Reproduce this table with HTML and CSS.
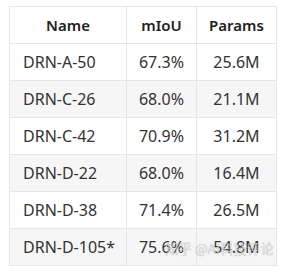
FILE: index.html
```html
<!DOCTYPE html>
<html>
<head>
<meta charset="utf-8">
<link rel="stylesheet" href="styles.css">
</head>
<body>
<div class="wrap">
<table class="tbl">
<thead>
<tr><th class="c1">Name</th><th class="c2">mIoU</th><th class="c3">Params</th></tr>
</thead>
<tbody>
<tr><td class="name">DRN-A-50</td><td>67.3%</td><td>25.6M</td></tr>
<tr class="alt"><td class="name">DRN-C-26</td><td>68.0%</td><td>21.1M</td></tr>
<tr><td class="name">DRN-C-42</td><td>70.9%</td><td>31.2M</td></tr>
<tr class="alt"><td class="name">DRN-D-22</td><td>68.0%</td><td>16.4M</td></tr>
<tr><td class="name">DRN-D-38</td><td>71.4%</td><td>26.5M</td></tr>
<tr class="alt"><td class="name">DRN-D-105*</td><td>75.6%</td><td>54.8M</td></tr>
</tbody>
</table>
<div class="watermark">知乎 @AI科技评论</div>
</div>
</body>
</html>
```
FILE: styles.css
```css
html, body {
  margin: 0;
  padding: 0;
  background: #fff;
}
.wrap {
  position: relative;
  padding: 6px 0 0 9px;
}
.tbl {
  border-collapse: collapse;
  font-family: "Noto Sans", "Noto Sans CJK SC", sans-serif;
  font-size: 16px;
  color: #333;
}
.tbl th, .tbl td {
  border: 1px solid #e6e6e6;
  height: 37px;
  padding: 0;
  box-sizing: border-box;
  text-align: center;
  line-height: 20px;
}
.tbl th {
  font-size: 15px;
  font-weight: 600;
  color: #222;
}
.c1 { width: 117px; }
.c2 { width: 70px; }
.c3 { width: 80px; }
.tbl td.name {
  text-align: left;
  padding-left: 13px;
}
.tbl tr.alt td {
  background: #f6f6f6;
}
.watermark {
  position: absolute;
  left: 165px;
  top: 239px;
  font-family: "Noto Sans CJK SC", sans-serif;
  font-size: 13.5px;
  line-height: 18px;
  color: rgba(255,255,255,0.55);
  text-shadow: 0 0 1px rgba(120,120,120,0.65);
  white-space: nowrap;
}
```
